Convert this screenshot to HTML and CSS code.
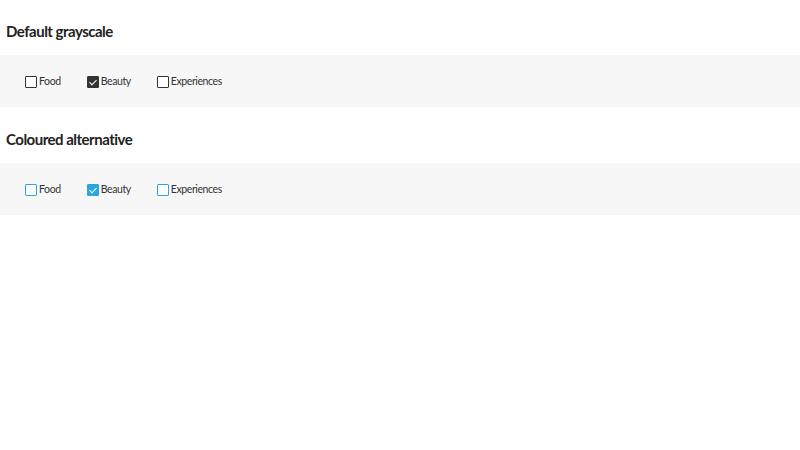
FILE: index.html
```html
<!DOCTYPE html>
<html>
<head>
    <title>Checkbox variants</title>
    <link rel="stylesheet" href="styles.css">
</head>
<body>
    <h2 class="section-title">Default grayscale</h2>
    <div class="panel">
        <label class="check">
            <input type="checkbox">
            <span class="box"></span>
            Food
        </label>
        <label class="check">
            <input type="checkbox" checked>
            <span class="box"></span>
            Beauty
        </label>
        <label class="check">
            <input type="checkbox">
            <span class="box"></span>
            Experiences
        </label>
    </div>

    <h2 class="section-title">Coloured alternative</h2>
    <div class="panel coloured">
        <label class="check">
            <input type="checkbox">
            <span class="box"></span>
            Food
        </label>
        <label class="check">
            <input type="checkbox" checked>
            <span class="box"></span>
            Beauty
        </label>
        <label class="check">
            <input type="checkbox">
            <span class="box"></span>
            Experiences
        </label>
    </div>
</body>
</html>
```

FILE: styles.css
```css
body {
    font-family: Lato, "Open Sans", sans-serif;
    color: #222;
    background: #fff;
    margin: 0;
}

.section-title {
    font-size: 15px;
    font-weight: bold;
    letter-spacing: -0.5px;
    margin: 0;
    padding: 0 6px;
    height: 55px;
    line-height: 62px;
    box-sizing: border-box;
}

.panel {
    background-color: #f7f7f7;
    height: 52px;
    margin-bottom: 1px;
    padding-left: 25px;
    display: flex;
    align-items: center;
    gap: 26px;
}

.check {
    display: flex;
    align-items: center;
    gap: 2px;
    font-size: 10.5px;
    letter-spacing: -0.4px;
    color: #333;
    cursor: pointer;
}

.check input {
    display: none;
}

.check .box {
    width: 10px;
    height: 10px;
    border: 1.5px solid #333;
    border-radius: 1px;
    background: #fff;
    position: relative;
    margin-top: 2px;
}

.check input:checked + .box {
    background: #333;
}

.check input:checked + .box::after {
    content: "";
    position: absolute;
    left: 3px;
    top: 1px;
    width: 3px;
    height: 6px;
    border: solid #fff;
    border-width: 0 1.5px 1.5px 0;
    transform: rotate(45deg);
}

.coloured .check .box {
    border-color: #2aa7e1;
}

.coloured .check input:checked + .box {
    background: #2aa7e1;
}
```
